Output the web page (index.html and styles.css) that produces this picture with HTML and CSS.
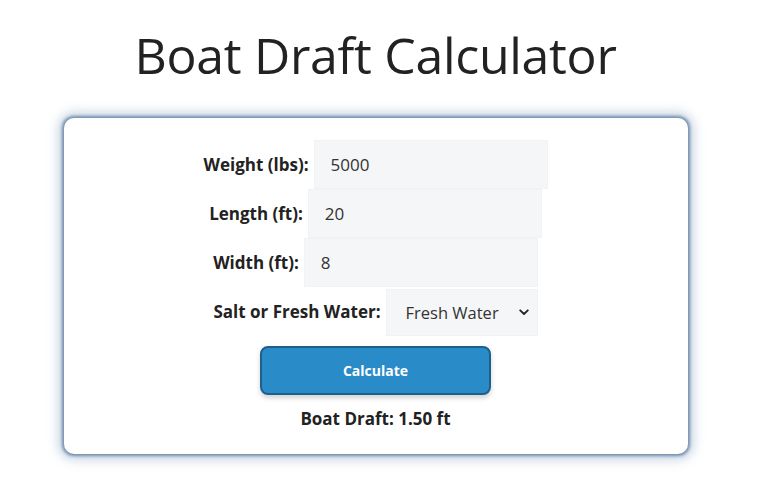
FILE: index.html
```html
<!DOCTYPE html>
<html lang="en">
<head>
<meta charset="utf-8">
<title>Boat Draft Calculator</title>
<link rel="stylesheet" href="styles.css">
</head>
<body>
<div class="page">
  <h1 class="title">Boat Draft Calculator</h1>
  <div class="card">
    <div class="row">
      <label class="label" for="weight">Weight (lbs):</label>
      <input class="field" id="weight" type="text" value="5000">
    </div>
    <div class="row">
      <label class="label" for="length">Length (ft):</label>
      <input class="field" id="length" type="text" value="20">
    </div>
    <div class="row">
      <label class="label" for="width">Width (ft):</label>
      <input class="field" id="width" type="text" value="8">
    </div>
    <div class="row">
      <label class="label" for="water">Salt or Fresh Water:</label>
      <div class="select-wrap">
        <select class="select" id="water">
          <option>Fresh Water</option>
          <option>Salt Water</option>
        </select>
        <svg class="chevron" width="10" height="7" viewBox="0 0 10 7"><path d="M1.2 1.3 L5 5 L8.8 1.3" fill="none" stroke="#222" stroke-width="1.8" stroke-linecap="round" stroke-linejoin="round"/></svg>
      </div>
    </div>
    <div class="actions">
      <button class="btn" type="button">Calculate</button>
    </div>
    <p class="result">Boat Draft: 1.50 ft</p>
  </div>
</div>
</body>
</html>
```
FILE: styles.css
```css
html, body {
  margin: 0;
  padding: 0;
  background: #ffffff;
}
body {
  font-family: "Open Sans", "Noto Sans", "Liberation Sans", sans-serif;
  color: #222222;
}
.page {
  width: 751px;
  padding: 18px 0 40px;
}
.title {
  margin: 0;
  text-align: center;
  font-weight: 400;
  font-size: 50px;
  line-height: 74px;
  color: #222222;
  letter-spacing: -0.3px;
}
.card {
  width: 624px;
  box-sizing: border-box;
  margin: 26px auto 0;
  background: #fff;
  border-radius: 10px;
  box-shadow: 0 0 3px 2px rgba(100, 130, 165, 0.85), 0 0 12px 5px rgba(120, 150, 185, 0.45);
  padding: 22px 0 0;
  height: 336px;
}
.row {
  display: flex;
  justify-content: center;
  align-items: center;
  gap: 5px;
}
.label {
  font-weight: 700;
  font-size: 17px;
  color: #222;
}
.field {
  width: 234px;
  height: 49px;
  box-sizing: border-box;
  border: 1px solid #f1f2f4;
  background: #f5f6f8;
  padding: 0 16px;
  font-family: inherit;
  font-size: 17px;
  color: #333;
  outline: none;
  margin: 0;
}
.select-wrap {
  position: relative;
  margin-top: 2px;
}
.select {
  appearance: none;
  -webkit-appearance: none;
  width: 152px;
  height: 47px;
  box-sizing: border-box;
  border: 1px solid #f1f2f4;
  background: #f5f6f8;
  padding: 0 19px;
  font-family: inherit;
  font-size: 16.5px;
  color: #333;
  margin: 0;
  display: block;
}
.chevron {
  position: absolute;
  right: 9px;
  top: 20px;
}
.actions {
  display: flex;
  justify-content: center;
  margin-top: 10px;
}
.btn {
  width: 231px;
  height: 49px;
  border: 2px solid #1f5f8e;
  border-radius: 8px;
  background: #2a8bc9;
  color: #fff;
  font-family: inherit;
  font-weight: 700;
  font-size: 14px;
  box-shadow: 0 3px 5px rgba(0, 0, 0, 0.18);
}
.result {
  margin: 12px 0 0;
  text-align: center;
  font-weight: 700;
  font-size: 17px;
  color: #222;
}
```
